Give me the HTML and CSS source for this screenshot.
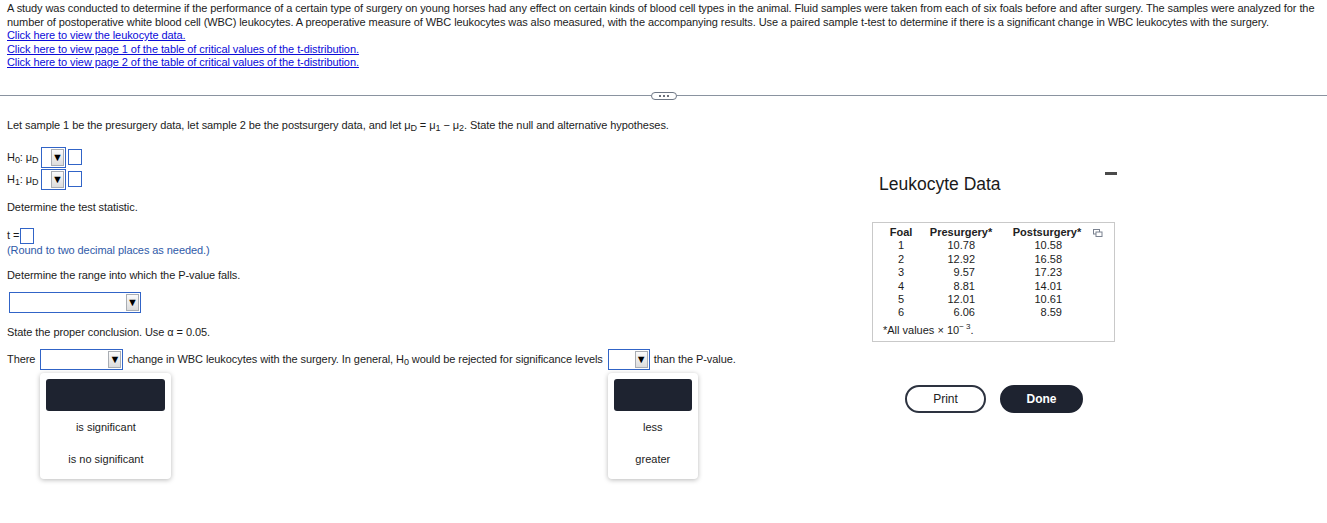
FILE: index.html
```html
<!DOCTYPE html>
<html>
<head>
<meta charset="utf-8">
<link rel="stylesheet" href="styles.css">
</head>
<body>
<div class="intro">
  <p class="lead">A study was conducted to determine if the performance of a certain type of surgery on young horses had any effect on certain kinds of blood cell types in the animal. Fluid samples were taken from each of six foals before and after surgery. The samples were analyzed for the<br>number of postoperative white blood cell (WBC) leukocytes. A preoperative measure of WBC leukocytes was also measured, with the accompanying results. Use a paired sample t-test to determine if there is a significant change in WBC leukocytes with the surgery.</p>
  <a class="link" href="#">Click here to view the leukocyte data.</a>
  <a class="link" href="#">Click here to view page 1 of the table of critical values of the t-distribution.</a>
  <a class="link" href="#">Click here to view page 2 of the table of critical values of the t-distribution.</a>
</div>

<div class="divider">
  <div class="rule"></div>
  <div class="pill"><span></span><span></span><span></span></div>
  <div class="rule"></div>
</div>

<div class="main">
  <div class="left">
    <p class="q first">Let sample 1 be the presurgery data, let sample 2 be the postsurgery data, and let μ<sub>D</sub> = μ<sub>1</sub> − μ<sub>2</sub>. State the null and alternative hypotheses.</p>

    <div class="hyps">
      <div class="hrow">
        <span class="hlabel">H<sub>0</sub>: μ<sub>D</sub></span>
        <span class="sel sel-h"><span class="arrow">▼</span></span>
        <span class="box"></span>
      </div>
      <div class="hrow">
        <span class="hlabel">H<sub>1</sub>: μ<sub>D</sub></span>
        <span class="sel sel-h"><span class="arrow">▼</span></span>
        <span class="box"></span>
      </div>
    </div>

    <p class="q stat">Determine the test statistic.</p>
    <div class="trow"><span>t =</span><span class="box tbox"></span></div>
    <p class="hint">(Round to two decimal places as needed.)</p>

    <p class="q range">Determine the range into which the P-value falls.</p>
    <div class="sel sel-wide"><span class="arrow">▼</span></div>

    <p class="q concl">State the proper conclusion. Use α = 0.05.</p>

    <div class="there">
      <span>There</span>
      <span class="dd-wrap">
        <span class="sel sel-there"><span class="arrow">▼</span></span>
        <span class="menu menu1">
          <span class="menu-top"></span>
          <span class="opt">is significant</span>
          <span class="opt">is no significant</span>
        </span>
      </span>
      <span>change in WBC leukocytes with the surgery. In general, H<sub>0</sub> would be rejected for significance levels</span>
      <span class="dd-wrap">
        <span class="sel sel-lvl"><span class="arrow">▼</span></span>
        <span class="menu menu2">
          <span class="menu-top"></span>
          <span class="opt">less</span>
          <span class="opt">greater</span>
        </span>
      </span>
      <span>than the P-value.</span>
    </div>
  </div>

  <div class="panel">
    <div class="phead">
      <h2 class="ptitle">Leukocyte Data</h2>
      <span class="minbar"></span>
    </div>
    <div class="datatable">
      <div class="grid">
        <span class="c1 th">Foal</span><span class="c2 th">Presurgery*</span><span class="c3 th">Postsurgery*</span>
        <span class="c4"><svg width="10" height="8" viewBox="0 0 10 8"><rect x="0.5" y="0.5" width="6" height="4.5" fill="#fff" stroke="#7a8290"/><rect x="3" y="3" width="6" height="4.5" fill="#fff" stroke="#7a8290"/></svg></span>
        <span class="c1">1</span><span class="c2 v">10.78</span><span class="c3 v">10.58</span><span></span>
        <span class="c1">2</span><span class="c2 v">12.92</span><span class="c3 v">16.58</span><span></span>
        <span class="c1">3</span><span class="c2 v">9.57</span><span class="c3 v">17.23</span><span></span>
        <span class="c1">4</span><span class="c2 v">8.81</span><span class="c3 v">14.01</span><span></span>
        <span class="c1">5</span><span class="c2 v">12.01</span><span class="c3 v">10.61</span><span></span>
        <span class="c1">6</span><span class="c2 v">6.06</span><span class="c3 v">8.59</span><span></span>
      </div>
      <p class="foot">*All values × 10<sup>− 3</sup>.</p>
    </div>
    <div class="buttons">
      <button class="btn btn-print">Print</button>
      <button class="btn btn-done">Done</button>
    </div>
  </div>
</div>
</body>
</html>
```

FILE: styles.css
```css
* { box-sizing: border-box; }
html, body { margin: 0; padding: 0; background: #fff; }
body {
  font-family: "Liberation Sans", Arial, sans-serif;
  font-size: 11px;
  color: #1c1c1c;
  width: 1327px;
  height: 523px;
  overflow: hidden;
}
p { margin: 0; }
sub { font-size: 9px; vertical-align: -2px; line-height: 0; }
sup { font-size: 8px; vertical-align: 5px; line-height: 0; }

.intro { padding: 2px 7px 0; line-height: 13.5px; letter-spacing: -0.08px; }
.lead { white-space: nowrap; }
.link { display: block; color: #0b0bd9; text-decoration: underline; width: max-content; }

.divider { display: flex; align-items: center; height: 9px; margin-top: 21.5px; }
.rule { flex: 1; height: 1px; background: #8a93a0; }
.pill {
  width: 26px; height: 8px; border: 1.5px solid #6e7785; border-radius: 4px;
  display: flex; align-items: center; justify-content: center; gap: 2px; background: #fff;
}
.pill span { width: 2px; height: 2px; background: #3b4250; border-radius: 1px; }

.main { display: flex; }
.left { width: 872px; padding-left: 7px; line-height: 13px; letter-spacing: -0.07px; }
.q.first { margin-top: 18.5px; }

.hyps { margin-top: 14.5px; }
.hrow { display: flex; align-items: center; height: 22px; }
.hlabel { width: 34px; }
.sel {
  display: inline-flex; justify-content: flex-end; align-items: center;
  border: 1px solid #3164c7; background: #fff; height: 21px; padding-right: 1px;
}
.arrow {
  width: 13px; height: 17px; border: 1px solid #a9adb3;
  background: linear-gradient(#fbfbfb, #dcdcdc);
  font-size: 11px; line-height: 15px; text-align: center; color: #000; letter-spacing: 0;
}
.sel-h { width: 25px; }
.box { display: inline-block; width: 14px; height: 16px; border: 1px solid #3164c7; margin-left: 2px; }

.q.stat { margin-top: 11px; }
.trow { display: flex; align-items: center; height: 16px; margin-top: 13.5px; }
.tbox { margin-left: 1px; }
.hint { color: #2f5aa8; margin-top: 0.5px; }

.q.range { margin-top: 12px; }
.sel-wide { display: flex; width: 132px; margin-left: 2px; margin-top: 9.5px; }
.q.concl { margin-top: 13.5px; }

.there { display: flex; align-items: center; height: 21px; margin-top: 9.5px; white-space: nowrap; }
.dd-wrap { position: relative; display: inline-flex; margin: 0 4px 0 5px; }
.sel-there { width: 83px; }
.sel-lvl { width: 42px; }
.menu {
  position: absolute; top: 24px; left: 0; background: #fff; border-radius: 4px;
  box-shadow: 0 1px 5px rgba(0,0,0,0.28); padding: 6px 6px 4px;
  display: flex; flex-direction: column; z-index: 2; letter-spacing: 0;
}
.menu1 { width: 131px; }
.menu2 { width: 90px; }
.menu-top { height: 32px; background: #1e2330; border-radius: 3px; }
.opt { height: 32px; line-height: 32px; text-align: center; color: #1c1c1c; }

.panel { width: 245px; margin-top: 68px; }
.phead { display: flex; justify-content: space-between; align-items: flex-start; }
.ptitle {
  margin: 6px 0 0 7px; font-weight: normal; font-size: 17.5px; line-height: 20px; color: #1a1a1a;
}
.minbar { width: 12px; height: 3px; background: #4a4a4a; margin-top: 4px; margin-right: 0; }

.datatable {
  width: 243px; margin-top: 28px; border: 1px solid #c9c9c9;
  padding: 3px 0 4px 9px; line-height: 13.4px;
}
.grid { display: grid; grid-template-columns: 38px 82px 90px 14px; }
.c1 { text-align: center; }
.c2, .c3 { text-align: center; }
.th { font-weight: bold; color: #222; }
.c2.v { text-align: right; padding-right: 27px; }
.c3.v { text-align: right; padding-right: 30px; }
.c4 { display: flex; align-items: center; padding-left: 1px; }
.foot { margin-top: 4px; padding-left: 1px; line-height: 13px; }

.buttons { display: flex; gap: 14px; margin: 43px 0 0 33px; }
.btn {
  font-family: "Liberation Sans", Arial, sans-serif; font-size: 12px; height: 28px;
  border-radius: 14px; cursor: pointer;
}
.btn-print { width: 81px; background: #fff; border: 2px solid #2d3340; color: #222; }
.btn-done { width: 83px; background: #1e2330; border: 2px solid #1e2330; color: #fff; font-weight: bold; }
```
